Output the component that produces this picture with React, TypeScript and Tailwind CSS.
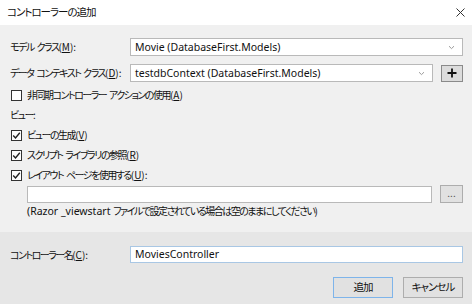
import React from 'react'

// アクセスキー表記 "(M)" — 括弧は詰めない
function Key({ k, colon = false }: { k: string; colon?: boolean }) {
  return (
    <span className="tracking-normal">
      (<u>{k}</u>){colon ? ':' : ''}
    </span>
  )
}

function Chevron() {
  return (
    <svg width="7" height="5" viewBox="0 0 7 5" className="shrink-0">
      <path d="M1 1.2 L3.5 3.6 L6 1.2" fill="none" stroke="#9a9a9a" strokeWidth="1" />
    </svg>
  )
}

function Select({ value, className = '' }: { value: string; className?: string }) {
  return (
    <div
      className={`flex h-[18px] items-center justify-between border border-[#b9b9b9] bg-white pl-[4px] pr-[7px] ${className}`}
    >
      <span className="font-['Noto_Sans',sans-serif] text-[10.5px] leading-none tracking-normal [word-spacing:normal]">{value}</span>
      <Chevron />
    </div>
  )
}

function Check({ checked, children }: { checked: boolean; children: React.ReactNode }) {
  return (
    <div className="flex h-[20px] items-center pl-[11px]">
      <div className="flex h-[11px] w-[11px] items-center justify-center border border-[#333] bg-white">
        {checked && (
          <svg width="9" height="9" viewBox="0 0 9 9">
            <path d="M1.2 4.6 L3.5 6.9 L7.8 1.8" fill="none" stroke="#222" strokeWidth="1.4" />
          </svg>
        )}
      </div>
      <span className="ml-[5px] leading-none">{children}</span>
    </div>
  )
}

export default function App() {
  return (
    <div className="h-[304px] w-[474px] overflow-hidden whitespace-nowrap bg-white text-[10px] tracking-[-1.5px] text-[#111] font-['Noto_Sans_CJK_JP',sans-serif] [font-feature-settings:'palt'] [word-spacing:2px]">
      {/* タイトルバー */}
      <div className="flex h-[25px] items-center justify-between pl-[7px] pr-[9px]">
        <span className="text-[10.5px] leading-none tracking-[-1px]">コントローラーの追加</span>
        <svg width="9" height="9" viewBox="0 0 9 9">
          <path d="M0.5 0.5 L8.5 8.5 M8.5 0.5 L0.5 8.5" stroke="#333" strokeWidth="1" />
        </svg>
      </div>

      {/* 本体 */}
      <div className="mr-[2px] flex h-[207px] flex-col bg-[#f0f0f0] pr-[9px] pt-[13px]">
        <div className="flex h-[18px] items-center">
          <span className="w-[130px] shrink-0 pl-[10px] leading-none">
            モデル クラス<Key k="M" colon />
          </span>
          <Select value="Movie (DatabaseFirst.Models)" className="flex-1" />
        </div>

        <div className="mt-[8px] flex h-[18px] items-center">
          <span className="w-[130px] shrink-0 pl-[10px] leading-none">
            データ コンテキスト クラス<Key k="D" colon />
          </span>
          <Select value="testdbContext (DatabaseFirst.Models)" className="flex-1" />
          <button className="ml-[8px] flex h-[17px] w-[22px] items-center justify-center border border-[#8a8a8a] bg-[#dcdcdc]">
            <svg width="10" height="10" viewBox="0 0 10 10">
              <path d="M5 0.5 V9.5 M0.5 5 H9.5" stroke="#111" strokeWidth="1.8" />
            </svg>
          </button>
        </div>

        <div className="mt-[3px]">
          <Check checked={false}>
            非同期コントローラー アクションの使用<Key k="A" />
          </Check>
          <div className="flex h-[20px] items-center pl-[10px] leading-none">ビュー:</div>
          <Check checked>
            ビューの生成<Key k="V" />
          </Check>
          <Check checked>
            スクリプト ライブラリの参照<Key k="R" />
          </Check>
          <Check checked>
            レイアウト ページを使用する<Key k="U" colon />
          </Check>
        </div>

        <div className="flex h-[18px] items-center pl-[27px]">
          <div className="h-[17px] flex-1 border border-[#b9b9b9] bg-white" />
          <button className="ml-[8px] flex h-[18px] w-[23px] items-center justify-center border border-[#adadad] bg-[#e1e1e1] pb-[3px] text-[10px] leading-none tracking-normal text-[#555]">
            ...
          </button>
        </div>

        <div className="flex h-[16px] items-center pl-[27px] leading-none">
          <span className="font-['Noto_Sans',sans-serif] text-[10.5px] tracking-normal [word-spacing:normal]">(Razor _viewstart&nbsp;</span>
          ファイルで設定されている場合は空のままにしてください
          <span className="tracking-normal">)</span>
        </div>
      </div>

      {/* 下部 */}
      <div className="mr-[2px] flex h-[72px] flex-col bg-[#e6e6e6] pr-[9px] pt-[14px]">
        <div className="flex h-[17px] items-center">
          <span className="w-[130px] shrink-0 pl-[10px] leading-none">
            コントローラー名<Key k="C" colon />
          </span>
          <div className="flex h-[17px] flex-1 items-center border border-[#a9c7e4] bg-white pl-[4px] font-['Noto_Sans',sans-serif] text-[10.5px] leading-none tracking-normal">
            MoviesController
          </div>
        </div>

        <div className="mt-[14px] flex justify-end gap-[10px]">
          <button className="h-[21px] w-[60px] border border-[#7eb4ea] bg-[#e1e1e1] text-[10.5px] leading-none tracking-[-1px]">追加</button>
          <button className="h-[21px] w-[60px] border border-[#adadad] bg-[#e1e1e1] text-[10.5px] leading-none tracking-[-1px]">キャンセル</button>
        </div>
      </div>
    </div>
  )
}
